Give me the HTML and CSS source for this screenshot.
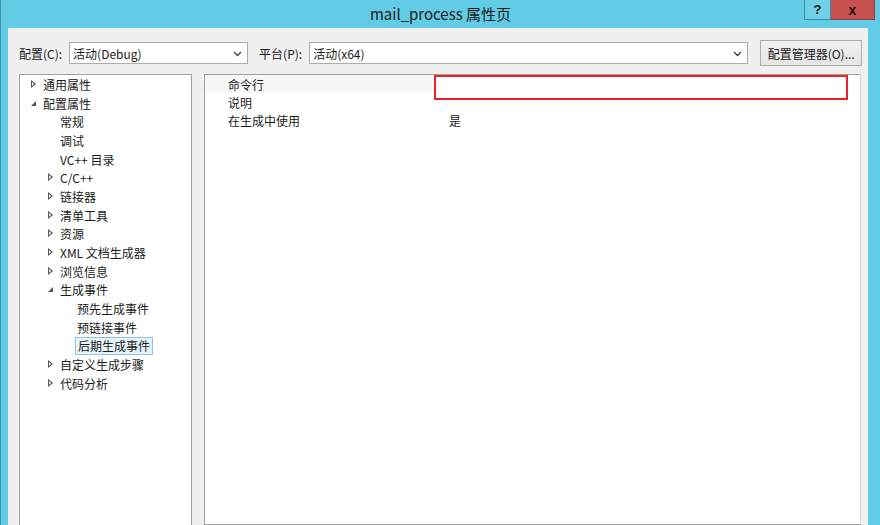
FILE: index.html
```html
<!DOCTYPE html>
<html lang="zh-CN">
  <head>
    <meta charset="UTF-8" />
    <title>mail_process 属性页</title>
    <link rel="stylesheet" href="styles.css">
  </head>
  <body>
    <div class="window">
      <div class="titlebar">
        <span class="title">mail_process 属性页</span>
        <div class="caption-buttons">
          <span class="cap-btn help">?</span>
          <span class="cap-btn close">x</span>
        </div>
      </div>
      <div class="client">
        <div class="toolbar">
          <label class="tb-label">配置(C):</label>
          <div class="combo combo-config">
            <span>活动(Debug)</span>
            <svg class="chev" width="9" height="6" viewBox="0 0 9 6"><path d="M1 1 L4.5 4.5 L8 1" fill="none" stroke="#444" stroke-width="1.3"/></svg>
          </div>
          <label class="tb-label">平台(P):</label>
          <div class="combo combo-platform">
            <span>活动(x64)</span>
            <svg class="chev" width="9" height="6" viewBox="0 0 9 6"><path d="M1 1 L4.5 4.5 L8 1" fill="none" stroke="#444" stroke-width="1.3"/></svg>
          </div>
          <button class="btn">配置管理器(O)...</button>
        </div>
        <div class="panes">
          <ul class="tree">
            <li class="node lv0"><i class="arrow closed"></i>通用属性</li>
            <li class="node lv0"><i class="arrow open"></i>配置属性</li>
            <li class="node lv1 leaf">常规</li>
            <li class="node lv1 leaf">调试</li>
            <li class="node lv1 leaf">VC++ 目录</li>
            <li class="node lv1"><i class="arrow closed"></i>C/C++</li>
            <li class="node lv1"><i class="arrow closed"></i>链接器</li>
            <li class="node lv1"><i class="arrow closed"></i>清单工具</li>
            <li class="node lv1"><i class="arrow closed"></i>资源</li>
            <li class="node lv1"><i class="arrow closed"></i>XML 文档生成器</li>
            <li class="node lv1"><i class="arrow closed"></i>浏览信息</li>
            <li class="node lv1"><i class="arrow open"></i>生成事件</li>
            <li class="node lv2 leaf">预先生成事件</li>
            <li class="node lv2 leaf">预链接事件</li>
            <li class="node lv2 leaf"><span class="selected">后期生成事件</span></li>
            <li class="node lv1"><i class="arrow closed"></i>自定义生成步骤</li>
            <li class="node lv1"><i class="arrow closed"></i>代码分析</li>
          </ul>
          <div class="grid">
            <div class="prop first">
              <span class="prop-name">命令行</span>
              <span class="prop-value"></span>
            </div>
            <div class="prop">
              <span class="prop-name">说明</span>
              <span class="prop-value"></span>
            </div>
            <div class="prop">
              <span class="prop-name">在生成中使用</span>
              <span class="prop-value">是</span>
            </div>
            <div class="highlight"></div>
          </div>
        </div>
      </div>
    </div>
  </body>
</html>
```

FILE: styles.css
```css
* {
  margin: 0;
  padding: 0;
  box-sizing: border-box;
}
body {
  font-family: "Microsoft YaHei", "Noto Sans CJK SC", "Liberation Sans", sans-serif;
  font-size: 12px;
  color: #1a1a1a;
  background: #62cbe5;
  width: 880px;
  height: 525px;
  overflow: hidden;
}
.window {
  height: 525px;
  display: flex;
  flex-direction: column;
  border-left: 1px solid #3d8da3;
}
.titlebar {
  height: 28px;
  flex-shrink: 0;
  position: relative;
  display: flex;
  justify-content: center;
  align-items: center;
}
.title {
  font-size: 15px;
  color: #1a1a1a;
  padding-bottom: 1px;
}
.caption-buttons {
  position: absolute;
  top: 0;
  right: 5px;
  display: flex;
}
.cap-btn {
  height: 20px;
  display: flex;
  justify-content: center;
  align-items: center;
  font-family: "Liberation Sans", sans-serif;
  font-weight: bold;
  border: 1px solid #3a90a8;
  border-top: none;
}
.help {
  width: 27px;
  font-size: 13px;
  color: #111;
  background: #6fd0e8;
}
.close {
  width: 44px;
  font-size: 14px;
  color: #2a1010;
  background: #c75050;
  border-color: #9a3b3b;
  border-left: none;
}
.client {
  flex: 1;
  margin: 0 12px 0 7px;
  background: #f0f0f0;
  display: flex;
  flex-direction: column;
  padding: 12px 7px 0 11px;
  min-height: 0;
}
.toolbar {
  display: flex;
  align-items: center;
  height: 26px;
  margin-bottom: 8px;
}
.tb-label {
  white-space: nowrap;
  flex-shrink: 0;
  margin-right: 7px;
}
.combo {
  flex-shrink: 0;
  height: 22px;
  background: #fff;
  border: 1px solid #acacac;
  display: flex;
  align-items: center;
  justify-content: space-between;
  padding: 0 5px 0 3px;
  margin-right: 11px;
}
.combo-config {
  width: 179px;
}
.combo-platform {
  width: 439px;
  margin-right: 12px;
}
.chev {
  margin-top: 1px;
}
.btn {
  flex-shrink: 0;
  font-family: inherit;
  font-size: 12px;
  color: #1a1a1a;
  width: 102px;
  height: 26px;
  border: 1px solid #acacac;
  background: linear-gradient(#f0f0f0, #e5e5e5);
  white-space: nowrap;
}
.panes {
  flex: 1;
  display: flex;
  gap: 12px;
  min-height: 0;
}
.tree {
  list-style: none;
  width: 173px;
  background: #fff;
  border: 1px solid #a0a0a0;
  border-bottom: none;
  padding-top: 0;
}
.node {
  height: 18.7px;
  display: flex;
  align-items: center;
  white-space: nowrap;
}
.lv0 {
  padding-left: 10px;
}
.lv1 {
  padding-left: 27px;
}
.leaf.lv1 {
  padding-left: 40px;
}
.leaf.lv2 {
  padding-left: 57px;
}
.arrow {
  width: 13px;
  height: 9px;
  flex-shrink: 0;
  position: relative;
}
.arrow.closed::before {
  content: "";
  position: absolute;
  left: 1px;
  top: 0;
  border-left: 5px solid #555;
  border-top: 4.5px solid transparent;
  border-bottom: 4.5px solid transparent;
}
.arrow.closed::after {
  content: "";
  position: absolute;
  left: 2px;
  top: 2px;
  border-left: 2.6px solid #fff;
  border-top: 2.5px solid transparent;
  border-bottom: 2.5px solid transparent;
}
.arrow.open::before {
  content: "";
  position: absolute;
  left: 1px;
  top: 2px;
  border-right: 5px solid #555;
  border-top: 5px solid transparent;
}
.selected {
  margin-left: -2px;
  padding: 0 2px;
  height: 18px;
  line-height: 16px;
  background: #e5f3fb;
  border: 1px solid #8dc2e6;
}
.grid {
  flex: 1;
  background: #fff;
  border: 1px solid #a0a0a0;
  border-right-color: #d6d6d6;
  height: 451px;
  position: relative;
  padding-top: 0;
}
.prop {
  height: 18px;
  display: flex;
  align-items: center;
}
.prop.first {
  background: #f7f7f7;
}
.prop-name {
  width: 230px;
  padding-left: 23px;
}
.prop-value {
  flex: 1;
  padding-left: 14px;
  background: #fff;
  align-self: stretch;
  display: flex;
  align-items: center;
}
.highlight {
  position: absolute;
  left: 229px;
  top: 0;
  width: 414px;
  height: 25px;
  border: 2px solid #e8232b;
}
```
